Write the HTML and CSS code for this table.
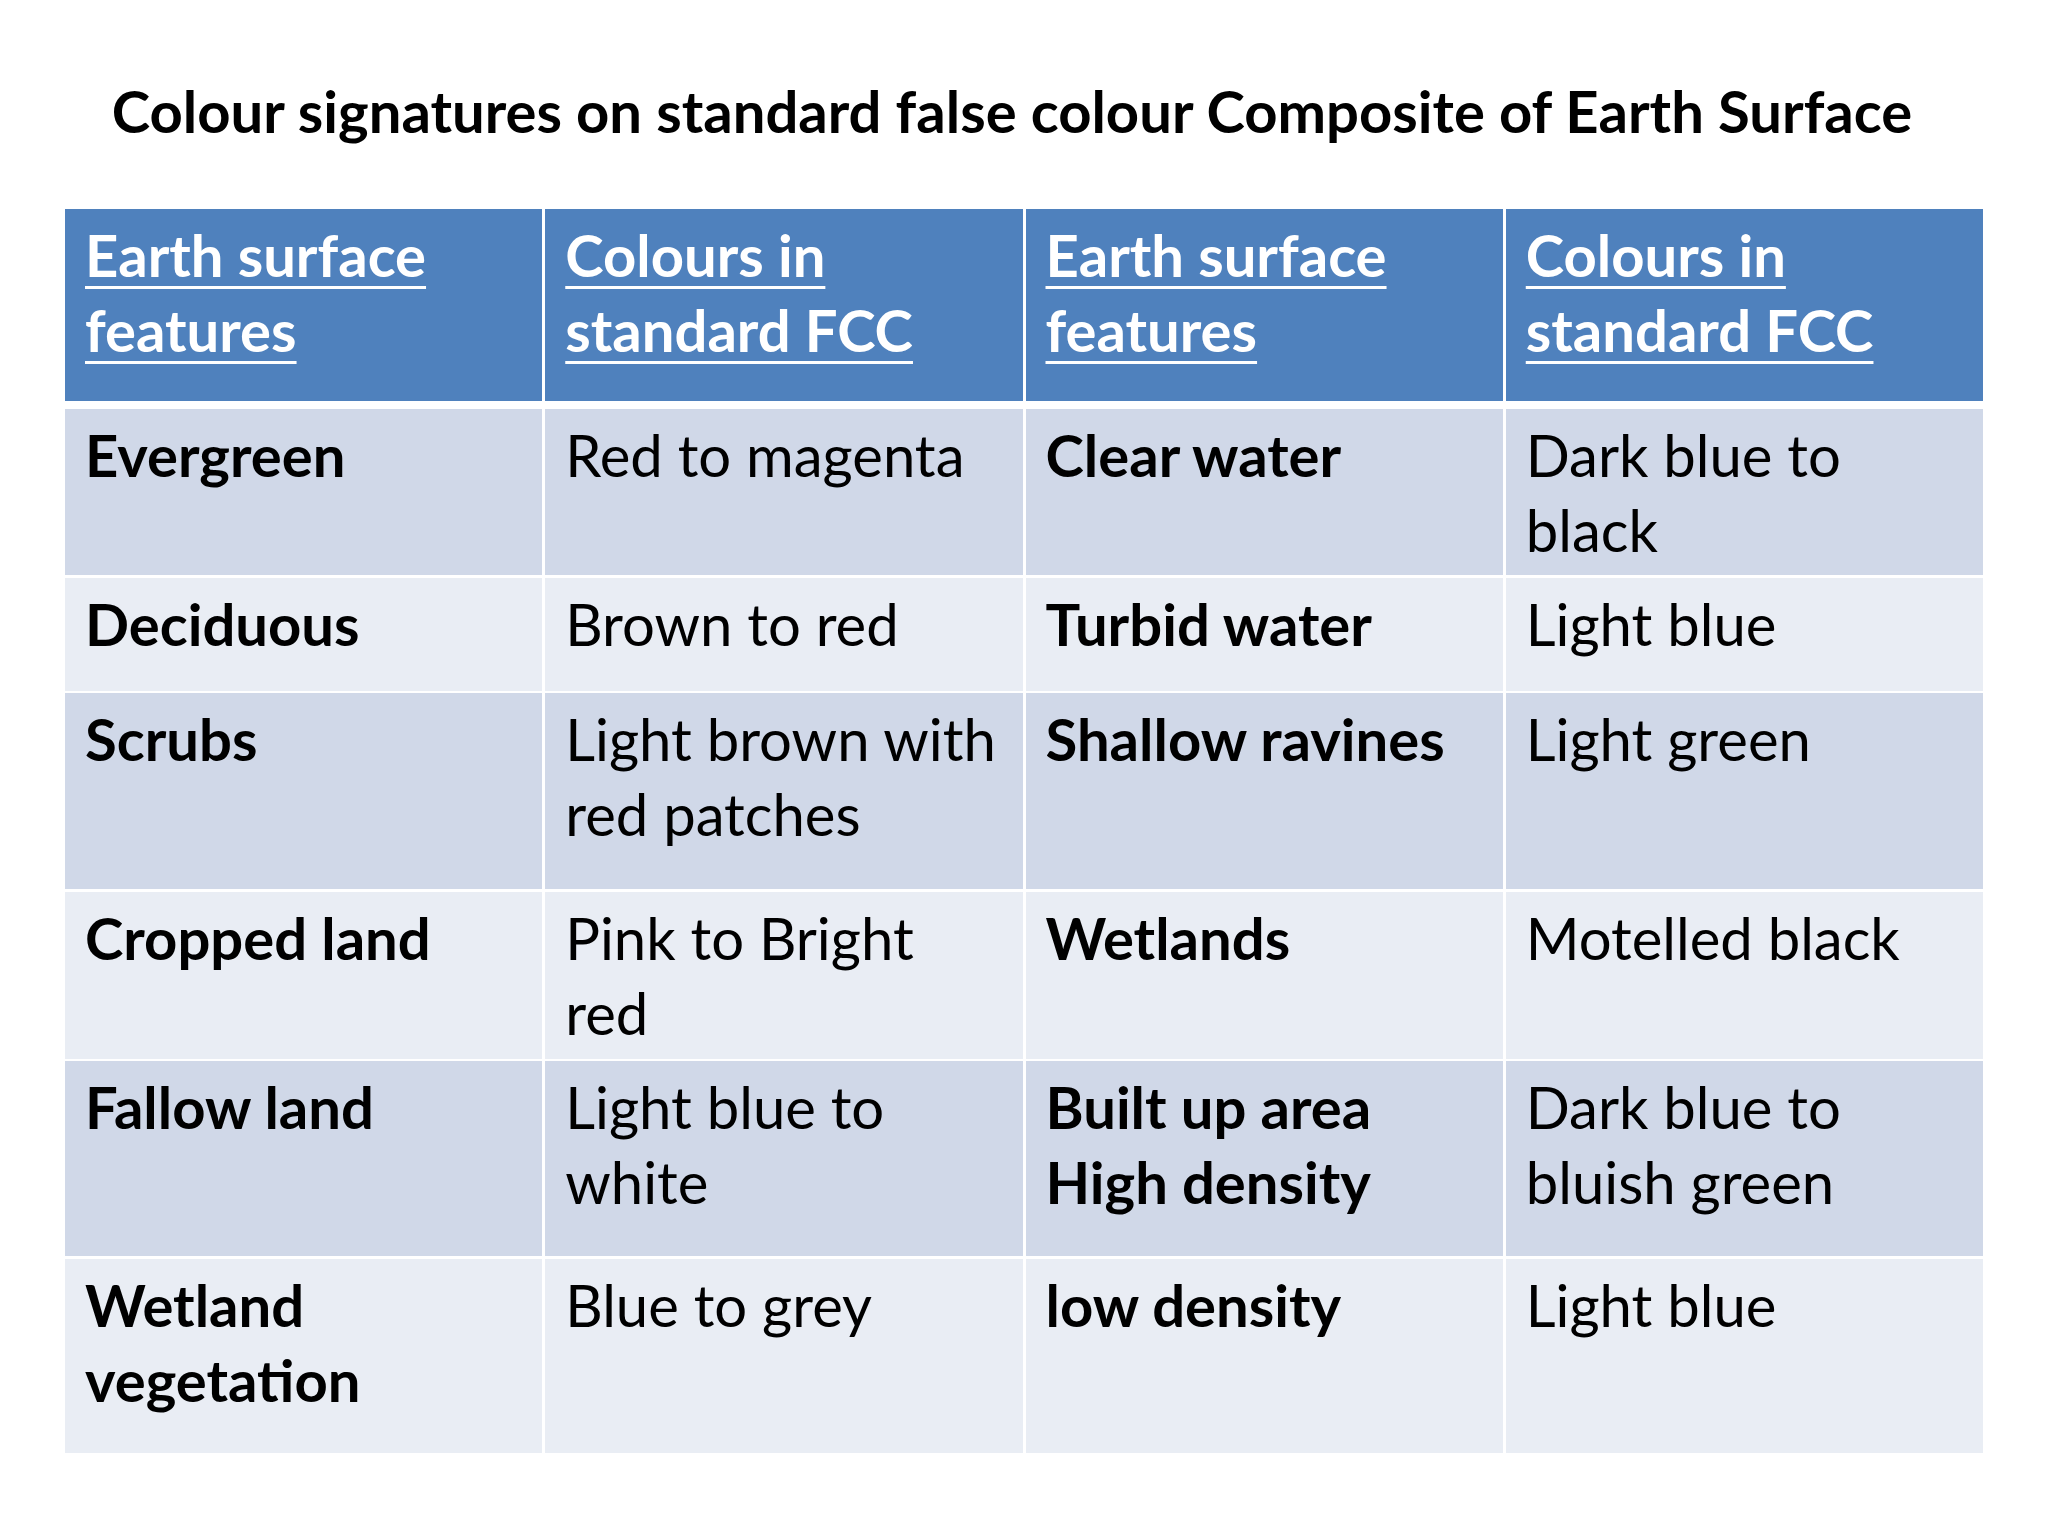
FILE: index.html
```html
<!DOCTYPE html>
<html lang="en">
<head>
<meta charset="utf-8">
<title>Colour signatures on standard false colour Composite</title>
<link rel="stylesheet" href="styles.css">
</head>
<body>
<main class="slide">
  <h1 class="title">Colour signatures on standard false colour Composite of Earth Surface</h1>
  <div class="table" role="table">
    <div class="thead" role="row">
      <div class="th" role="columnheader"><span class="ul">Earth surface features</span></div>
      <div class="th" role="columnheader"><span class="ul">Colours in standard FCC</span></div>
      <div class="th" role="columnheader"><span class="ul">Earth surface features</span></div>
      <div class="th" role="columnheader"><span class="ul">Colours in standard FCC</span></div>
    </div>
    <div class="tbody">
      <div class="td band1 b">Evergreen</div>
      <div class="td band1">Red to magenta</div>
      <div class="td band1 b">Clear water</div>
      <div class="td band1">Dark blue to black</div>

      <div class="td band2 b">Deciduous</div>
      <div class="td band2">Brown to red</div>
      <div class="td band2 b">Turbid water</div>
      <div class="td band2">Light blue</div>

      <div class="td band1 b">Scrubs</div>
      <div class="td band1">Light brown with red patches</div>
      <div class="td band1 b">Shallow ravines</div>
      <div class="td band1">Light green</div>

      <div class="td band2 b">Cropped land</div>
      <div class="td band2">Pink to Bright red</div>
      <div class="td band2 b">Wetlands</div>
      <div class="td band2">Motelled black</div>

      <div class="td band1 b">Fallow land</div>
      <div class="td band1">Light blue to white</div>
      <div class="td band1 b">Built up area High density</div>
      <div class="td band1">Dark blue to bluish green</div>

      <div class="td band2 b">Wetland vegetation</div>
      <div class="td band2">Blue to grey</div>
      <div class="td band2 b">low density</div>
      <div class="td band2">Light blue</div>
    </div>
  </div>
</main>
</body>
</html>
```

FILE: styles.css
```css
html, body {
  margin: 0;
  padding: 0;
  background: #ffffff;
}

body {
  font-family: Lato, "Liberation Sans", sans-serif;
  color: #000000;
}

.slide {
  width: 2048px;
  height: 1536px;
  display: flex;
  flex-direction: column;
  align-items: center;
}

.title {
  margin: 0;
  padding-top: 82px;
  padding-right: 24px;
  height: 209px;
  box-sizing: border-box;
  font-size: 58px;
  line-height: 58px;
  font-weight: 700;
  text-align: center;
  white-space: nowrap;
}

.table {
  width: 1918px;
  display: flex;
  flex-direction: column;
  gap: 8px;
}

.thead,
.tbody {
  display: grid;
  grid-template-columns: repeat(4, 1fr);
  column-gap: 3px;
}

.thead {
  height: 192px;
}

.tbody {
  row-gap: 2.5px;
  grid-template-rows: 166px 113px 196px 167px 195px 194px;
}

.th,
.td {
  padding: 8px 20px 0 20px;
  font-size: 58px;
  line-height: 75px;
}

.th {
  background: #4f81bd;
  color: #ffffff;
  font-weight: 700;
}

.ul {
  text-decoration: underline;
  text-decoration-thickness: 3px;
  text-underline-offset: 9px;
}

.band1 {
  background: #d0d8e8;
}

.band2 {
  background: #e9edf4;
}

.b {
  font-weight: 700;
}
```
